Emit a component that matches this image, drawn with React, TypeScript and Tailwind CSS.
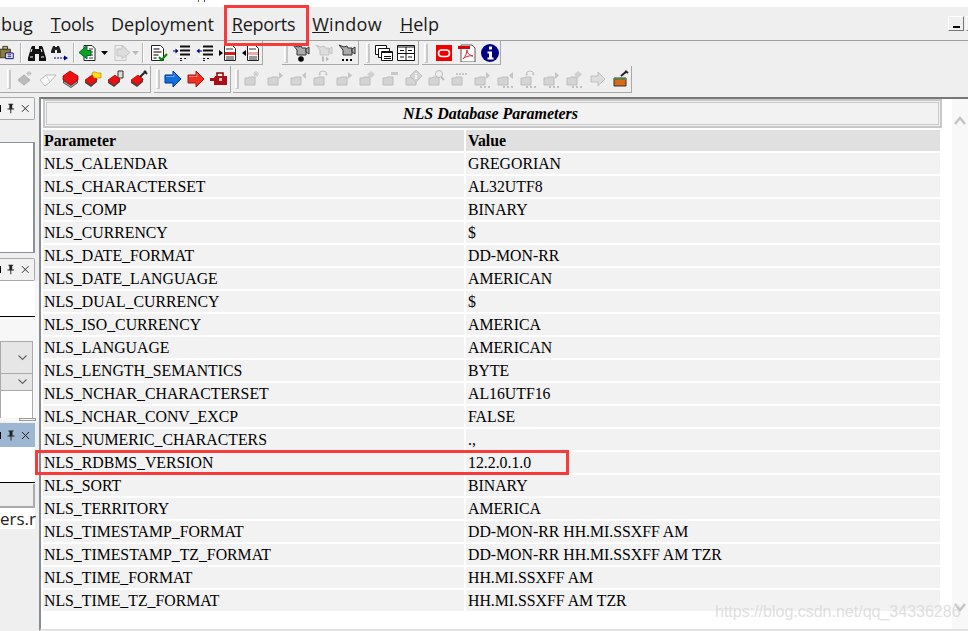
import React from "react";

const rows: [string, string][] = [
  ["NLS_CALENDAR", "GREGORIAN"],
  ["NLS_CHARACTERSET", "AL32UTF8"],
  ["NLS_COMP", "BINARY"],
  ["NLS_CURRENCY", "$"],
  ["NLS_DATE_FORMAT", "DD-MON-RR"],
  ["NLS_DATE_LANGUAGE", "AMERICAN"],
  ["NLS_DUAL_CURRENCY", "$"],
  ["NLS_ISO_CURRENCY", "AMERICA"],
  ["NLS_LANGUAGE", "AMERICAN"],
  ["NLS_LENGTH_SEMANTICS", "BYTE"],
  ["NLS_NCHAR_CHARACTERSET", "AL16UTF16"],
  ["NLS_NCHAR_CONV_EXCP", "FALSE"],
  ["NLS_NUMERIC_CHARACTERS", ".,"],
  ["NLS_RDBMS_VERSION", "12.2.0.1.0"],
  ["NLS_SORT", "BINARY"],
  ["NLS_TERRITORY", "AMERICA"],
  ["NLS_TIMESTAMP_FORMAT", "DD-MON-RR HH.MI.SSXFF AM"],
  ["NLS_TIMESTAMP_TZ_FORMAT", "DD-MON-RR HH.MI.SSXFF AM TZR"],
  ["NLS_TIME_FORMAT", "HH.MI.SSXFF AM"],
  ["NLS_TIME_TZ_FORMAT", "HH.MI.SSXFF AM TZR"],
];

const Ico = ({ children, w = 18 }: { children: React.ReactNode; w?: number }) => (
  <svg width={w} height="18" viewBox={`0 0 ${w} 18`} className="block">
    {children}
  </svg>
);

const Cell = ({ children }: { children: React.ReactNode }) => (
  <div className="flex h-full w-[23px] shrink-0 items-center justify-center">{children}</div>
);

const Grip = () => (
  <div className="mx-[2px] h-[20px] w-[4px] shrink-0 rounded-[1px] border border-r-2 border-[#c8c8c8] border-t-white border-l-white bg-[#f4f4f4]" />
);

const Sep = () => <div className="h-[20px] w-[2px] shrink-0 border-r border-l border-r-white border-l-[#b4b4b4]" />;

const Drop = ({ color = "#000" }: { color?: string }) => (
  <svg width="7" height="4" viewBox="0 0 7 4" className="block shrink-0">
    <path d="M0 0h7L3.500 4z" fill={color} />
  </svg>
);

const Binoculars = ({ small }: { small?: boolean }) =>
  small ? (
    <Ico>
      <path d="M0 7l2-5h2v1h2V2h2l2 5v2H6V6H4v3H0z" fill="#222" />
      <path d="M3 14h11" stroke="#000080" strokeDasharray="2 1" />
      <path d="M13 11.500l4 2.500-4 2.500z" fill="#000080" />
    </Ico>
  ) : (
    <Ico>
      <path d="M0 14l3-10 1-2h3v3h4V2h3l1 2 3 10v3h-7v-7H7v7H0z" fill="#111" />
      <path d="M2 13h3M13 13h3M3 8l1-3M14 8l-1-3" stroke="#fff" />
    </Ico>
  );

const Lines = ({ dir }: { dir: "in" | "out" }) => (
  <Ico>
    <path d="M7 2.500h10M7 6.500h10M7 10.500h10" stroke="#111" strokeWidth="2" />
    <path d="M3 4.500h6M3 8.500h6M3 12.500h6" stroke="#fff" />
    <path d="M7 14.500h2M7 16.500h2M11 14.500h2" stroke="#111" />
    {dir === "in" ? (
      <path d="M0 6.500h2.500v-2l3 2.500-3 2.500v-2H0z" fill="#000080" />
    ) : (
      <path d="M6 6.500H3.500v-2l-3 2.500 3 2.500v-2H6z" fill="#000080" />
    )}
  </Ico>
);

const SheetBand = ({ band, left }: { band: string; left?: boolean }) => (
  <Ico>
    <path d="M5.500 1.500h8l3 3v12h-11z" fill="#fff" stroke="#222" />
    <path d="M7 5h7M7 13h8M7 15h8" stroke="#333" />
    <path d="M6 8h10v3H6z" fill={band} />
    <path d={left ? "M4 6L0 9l4 3z" : "M0 6l4 3-4 3z"} fill="#000" />
  </Ico>
);

const Cam = ({ gray, foot }: { gray?: boolean; foot: "dot" | "pause" | "dots" }) => {
  const c = gray ? "#c4c4c4" : "#333";
  return (
    <Ico>
      <path d="M1 1l5 2 3-1 1 2h4v7H5V6z" fill={gray ? "#ddd" : "#aaa"} stroke={c} />
      <path d="M14 5l3-2v7l-3-2z" fill={gray ? "#ddd" : "#aaa"} stroke={c} />
      {foot === "dot" && <circle cx="9" cy="15" r="2.800" fill="#000" />}
      {foot === "pause" && <path d="M7 12.500h2v5H7zM11 12.500l3 2.500-3 2.500z" fill="#bbb" />}
      {foot === "dots" && <path d="M4 15h2v2H4zM8 15h2v2H8zM12 15h2v2h-2z" fill="#000" />}
    </Ico>
  );
};

const BigBook = () => (
  <Ico>
    <path d="M1 10l8 5 7-5v3l-7 5-8-5z" fill="#555" />
    <path d="M2 12l7 4.500L15 12" stroke="#ddd" fill="none" strokeWidth=".7" />
    <path d="M1 6l7-5 8 5v4l-7 5-8-5z" fill="#ee1010" stroke="#700" strokeWidth=".7" />
  </Ico>
);

const SmallBook = ({ extra }: { extra: React.ReactNode }) => (
  <Ico>
    <path d="M0 11l6 4 6-5v2l-6 5-6-4z" fill="#444" />
    <path d="M0 10l7-5 5 4v1l-6 5-6-4z" fill="#ee1010" stroke="#700" strokeWidth=".6" />
    {extra}
  </Ico>
);

const Arrow = ({ fill, stroke }: { fill: string; stroke: string }) => (
  <Ico>
    <path d="M1 5h8V1l8 8-8 8v-4H1z" fill={fill} stroke={stroke} />
    <path d="M2 6.500h8V3.500" fill="none" stroke="#fff" strokeOpacity=".4" />
  </Ico>
);

type Mark = "star" | "right" | "left" | "undo" | "diamond" | "minus" | "info" | "search" | "dots" | "arrow";

const GrayFolder = ({ mark, dots }: { mark: Mark; dots?: boolean }) => (
  <Ico>
    {mark === "arrow" ? (
      <path d="M2 6h7V2l7 7-7 7v-4H2z" fill="#ddd" stroke="#c0c0c0" />
    ) : (
      <path d="M1 8h3l1-1h6v8H1z" fill="#d4d4d4" stroke="#bdbdbd" />
    )}
    {mark === "star" && <path d="M12 1v6M9 4h6M10 2l4 4M14 2l-4 4" stroke="#c8c8c8" />}
    {mark === "right" && <path d="M12 2l4 3.500-4 3.500z" fill="#c4c4c4" />}
    {mark === "left" && <path d="M16 2l-4 3.500 4 3.500z" fill="#c4c4c4" />}
    {mark === "undo" && <path d="M6 5a4 4 0 0 1 8 0l-2-1M6 5l2-1" stroke="#c0c0c0" fill="none" />}
    {mark === "diamond" && <path d="M12 1l4 3.500-4 3.500-4-3.500z" fill="#d0d0d0" />}
    {mark === "minus" && <path d="M9 2h7v3H9z" fill="#c8c8c8" />}
    {mark === "info" && (
      <>
        <path d="M11 0l6 6-6 6-6-6z" fill="#d4d4d4" stroke="#bdbdbd" />
        <path d="M11 3v1M11 5v4" stroke="#fff" strokeWidth="1.500" />
      </>
    )}
    {mark === "search" && (
      <>
        <circle cx="11" cy="4" r="3.500" fill="#eee" stroke="#bbb" />
        <path d="M13 7l3 3" stroke="#bbb" strokeWidth="2" />
      </>
    )}
    {mark === "dots" && <path d="M5 3h2v2H5zM8 3h2v2H8zM11 3h2v2h-2zM14 3h2v2h-2z" fill="#c8c8c8" />}
    {dots && <path d="M6 16h2v2H6zM10 16h2v2h-2zM14 16h2v2h-2z" fill="#c0c0c0" />}
  </Ico>
);

const grayMarks: [Mark, boolean?][] = [
  ["star"],
  ["right"],
  ["left"],
  ["undo"],
  ["right"],
  ["diamond"],
  ["minus"],
  ["info"],
  ["search"],
  ["dots"],
  ["right", true],
  ["left", true],
  ["undo", true],
  ["right", true],
  ["diamond", true],
  ["arrow"],
];

const bar1 = "flex h-[24px] shrink-0 items-center border-r border-b border-[#a8a8a8]";

const Row1 = () => (
  <div className="flex h-[25px] items-start">
    <div className={`${bar1} w-[263px]`}>
      <div className="flex w-[17px] shrink-0 justify-end overflow-hidden">
        <Ico>
          <path d="M0 5h11v9H0z" fill="#8c7c3c" stroke="#333" />
          <path d="M3 2h5v3H3z" fill="#c8b060" stroke="#333" />
          <path d="M6 9h8v6H6z" fill="#fff" stroke="#000080" />
          <path d="M8 11h4M8 13h4" stroke="#000080" />
        </Ico>
      </div>
      <div className="ml-[3px]"><Sep /></div>
      <div className="ml-[3px]"><Cell><Binoculars /></Cell></div>
      <Cell><Binoculars small /></Cell>
      <div className="ml-[2px]"><Sep /></div>
      <Cell>
        <Ico>
          <path d="M6 1.500h8l3 3v12H6z" fill="#fff" stroke="#222" />
          <path d="M11 5h4M11 8h4M11 11h4M11 14h4" stroke="#333" />
          <path d="M9 1.500L1 8.500 9 15v-3.500h4v-5H9z" fill="#10a020" stroke="#063" />
        </Ico>
      </Cell>
      <div className="ml-[3px]"><Drop /></div>
      <div className="ml-[2px]"><Cell>
        <Ico>
          <path d="M2 1.500h8l3 3v12H2z" fill="#eee" stroke="#c4c4c4" />
          <path d="M9 2l8 6.500L9 15v-3H4V5h5z" fill="#ddd" stroke="#c4c4c4" />
        </Ico>
      </Cell></div>
      <div className="-ml-[1px]"><Drop color="#bbb" /></div>
      <div className="ml-[3px]"><Sep /></div>
      <div className="ml-[3px]"><Cell>
        <Ico>
          <path d="M1.500 1.500h9l3 3v12h-12z" fill="#fff" stroke="#222" />
          <path d="M3.500 5h6M3.500 8h8M3.500 11h5M3.500 14h3" stroke="#555" strokeWidth="1.500" />
          <path d="M9 13l2.500 3L17 10" stroke="#080" strokeWidth="2" fill="none" />
        </Ico>
      </Cell></div>
      <Cell><Lines dir="in" /></Cell>
      <Cell><Lines dir="out" /></Cell>
      <Cell><SheetBand band="#e01818" /></Cell>
      <Cell><SheetBand band="#f4a8a8" left /></Cell>
    </div>
    <div className={`${bar1} ml-[19px] w-[77px]`}>
      <Grip />
      <div className="-ml-[1px] flex h-full">
        <Cell><Cam foot="dot" /></Cell>
        <Cell><Cam gray foot="pause" /></Cell>
        <Cell><Cam foot="dots" /></Cell>
      </div>
    </div>
    <div className={`${bar1} ml-[5px] w-[55px]`}>
      <Grip />
      <div className="flex h-full">
        <Cell>
          <Ico>
            <path d="M.500 1.500h11v9H.500z" fill="#fff" stroke="#111" />
            <path d="M3.500 4.500h11v9h-11z" fill="#fff" stroke="#111" />
            <path d="M6.500 7.500h11v9h-11z" fill="#fff" stroke="#111" />
            <path d="M7 8.500h10M9 12.500h7M9 14.500h7" stroke="#111" />
          </Ico>
        </Cell>
        <div className="-ml-[1px]"><Cell>
          <Ico>
            <path d="M.500 1.500h17v15H.500z" fill="#fff" stroke="#111" />
            <path d="M1 3h16M9 3v13M1 9.500h16M3 6.500h4M11 6.500h4M3 13h4M11 13h4" stroke="#111" />
          </Ico>
        </Cell></div>
      </div>
    </div>
    <div className={`${bar1} ml-[3px] w-[79px]`}>
      <Grip />
      <div className="ml-[2px] flex h-full">
        <Cell>
          <Ico>
            <path d="M1 1h16v16H1z" fill="#f00000" />
            <rect x="3.500" y="6" width="11" height="6.500" rx="3.200" fill="none" stroke="#fff" strokeWidth="1.600" />
          </Ico>
        </Cell>
        <Cell>
          <Ico>
            <path d="M3 1h11l3 3v14H3z" fill="#fff" stroke="#555" />
            <path d="M0 2h12v3H0z" fill="#e00000" />
            <path d="M5 15c3-3 4-7 4-9 0 3 2 5 6 6-3-.500-7 0-10 3z" fill="none" stroke="#d02020" />
          </Ico>
        </Cell>
        <Cell>
          <Ico>
            <circle cx="9" cy="9" r="9" fill="#000080" />
            <path d="M8 2.500h3v3H8zM6.500 7.500H11v6h1.500v2h-6v-2H8v-4H6.500z" fill="#fff" />
          </Ico>
        </Cell>
      </div>
    </div>
  </div>
);

const bar2 = "flex h-[27px] shrink-0 items-center border-r border-b border-[#a8a8a8]";

const Row2 = () => (
  <div className="flex h-[27px]">
    <div className={`${bar2} w-[151px] pl-[5px]`}>
      <Grip />
      <Cell>
        <Ico>
          <path d="M2 10l6-5 6 5-6 5z" fill="#bbb" stroke="#aaa" />
          <path d="M13 1v5M10.500 3.500h5M11 2l4 3M15 2l-4 3" stroke="#c4c4c4" />
        </Ico>
      </Cell>
      <Cell>
        <Ico>
          <path d="M1 10l6-5 10 0-6 7-5 4z" fill="#fafafa" stroke="#bbb" />
          <path d="M7 5l4 7" stroke="#ccc" />
        </Ico>
      </Cell>
      <Cell><BigBook /></Cell>
      <Cell><SmallBook extra={<path d="M7 4l1-2h3l1 1h4v5H9z" fill="#ffe010" stroke="#a08000" strokeWidth=".6" />} /></Cell>
      <Cell><SmallBook extra={<path d="M10 1h5v7h-5z" fill="#ddd" stroke="#333" />} /></Cell>
      <Cell><SmallBook extra={<path d="M9 7l6-6M13 1l3 3" stroke="#222" strokeWidth="2" />} /></Cell>
    </div>
    <div className={`${bar2} ml-[3px] w-[77px]`}>
      <Grip />
      <div className="-ml-[1px] flex h-full">
        <Cell><Arrow fill="#1070e0" stroke="#003090" /></Cell>
        <Cell><Arrow fill="#f03020" stroke="#a01810" /></Cell>
        <Cell>
          <Ico>
            <path d="M7 6V3h6v3" fill="none" stroke="#800" strokeWidth="1.500" />
            <path d="M0 8h4l1-2h12v9H4v-4H0z" fill="#a80f14" />
            <path d="M9 8h3v3H9z" fill="#f0c0c0" />
          </Ico>
        </Cell>
      </div>
    </div>
    <div className={`${bar2} ml-[2px] w-[399px]`}>
      <Grip />
      <div className="flex h-full">
        {grayMarks.map(([m, d], i) => (
          <Cell key={i}><GrayFolder mark={m} dots={d} /></Cell>
        ))}
        <Cell>
          <Ico>
            <path d="M2 8h12v8H2z" fill="#d86a18" stroke="#333" />
            <path d="M2 8h12v2H2z" fill="#608040" />
            <path d="M9 6l6-5M13 1l3 2" stroke="#222" strokeWidth="2" />
          </Ico>
        </Cell>
      </div>
    </div>
  </div>
);

const Pin = ({ active }: { active?: boolean }) => (
  <div
    className={`flex w-[35px] shrink-0 items-center justify-end gap-[6px] pr-[5px] ${
      active ? "h-[24px] bg-[#9db7d3]" : "h-[23px] rounded-r-[2px] border border-l-0 border-[#aaaaaa] bg-[#f2f2f2]"
    }`}
  >
    <div className="h-[7px] w-[1px] bg-black" />
    <svg width="8" height="11" viewBox="0 0 8 11" className="block">
      <path d="M1.500 .500h5v1h-1v4h2v1H.500v-1h2v-4h-1zM3.500 6.500h1v4h-1z" fill="#222" />
    </svg>
    <svg width="9" height="9" viewBox="0 0 9 9" className="block">
      <path d="M1 1l7 7M8 1L1 8" stroke="#222" fill="none" />
    </svg>
  </div>
);

const Chev = ({ y }: { y: "up" | "down" }) => (
  <svg width="12" height="9" viewBox="0 0 12 9" className="block">
    <path d={y === "up" ? "M1 8l5-6 5 6" : "M1 1l5 6 5-6"} fill="none" stroke="#c4c4c4" strokeWidth="2.500" />
  </svg>
);

const Combo = ({ h }: { h: string }) => (
  <div className={`flex items-center justify-end border-b border-[#aaaaaa] bg-[#e6e6e6] pr-[5px] ${h}`}>
    <svg width="9" height="6" viewBox="0 0 9 6" className="block">
      <path d="M.500 .500l4 4 4-4" fill="none" stroke="#666" strokeWidth="1.200" />
    </svg>
  </div>
);

const LeftPane = () => (
  <aside className="flex h-full w-[39px] shrink-0 flex-col bg-[#efefef]">
    <Pin />
    <div className="mt-[22px] h-[111px] w-[35px] border-y border-r-2 border-[#8b9299] bg-white" />
    <div className="mt-[5px]"><Pin /></div>
    <div className="flex w-[39px] flex-col bg-[#f7f7f7]">
      <div className="h-[36px] w-[35px] border-b border-black bg-white" />
      <div className="h-[24px] w-[33px]" />
      <div className="w-[33px] border-x border-t border-[#aaaaaa]">
        <Combo h="h-[32px]" />
        <Combo h="h-[17px]" />
        <div className="h-[27px] bg-white" />
      </div>
      <div className="flex h-[4px] justify-end">
        <div className="mr-[3px] h-[3px] w-[17px] border border-[#999]" />
      </div>
    </div>
    <div className="mt-[1px]"><Pin active /></div>
    <div className="h-[36px] w-[35px] border-b border-black bg-white" />
    <div className="mt-[1px] h-[24px] w-[35px] border-r-2 border-b-2 border-[#aaaaaa] bg-[#efefef]" />
    <div className="h-[21px] w-[35px] bg-white font-['Open_Sans',sans-serif] text-[17px] leading-[21px] text-[#222]">ers.r</div>
  </aside>
);

const TableRow = ({ a, b, head }: { a: string; b: string; head?: boolean }) => (
  <div className="grid grid-cols-[421px_474px] gap-x-[2px]">
    <div className={`h-[21px] pl-px leading-[21px] ${head ? "bg-[#e0e0e0] font-bold" : "bg-[#f2f2f2]"}`}>{a}</div>
    <div className={`h-[21px] pl-[2px] leading-[21px] ${head ? "bg-[#e0e0e0] font-bold" : "bg-[#f2f2f2]"}`}>{b}</div>
  </div>
);

const MainPane = () => (
  <main className="flex h-full flex-1 border-t-2 border-b-2 border-l-2 border-t-[#777] border-r-0 border-b-[#e2e2e2] border-l-[#888d92] bg-white font-['Liberation_Serif',serif] text-[15.800px] text-black">
    <div className="w-[901px] pl-[2px]">
      <div className="w-[899px] border-2 border-[#c8c8c8] bg-[#f2f2f2] p-[1px]">
        <div className="flex h-[23px] items-center justify-center border border-[#c8c8c8] pr-[4px] text-[16px] font-bold italic">
          NLS Database Parameters
        </div>
      </div>
      <div className="mt-[2px] flex flex-col gap-[2px]">
        <TableRow a="Parameter" b="Value" head />
        {rows.map(([a, b]) => (
          <TableRow key={a} a={a} b={b} />
        ))}
      </div>
    </div>
    <div className="ml-[10px] flex w-[16px] flex-col items-center justify-between bg-[#f8f8f8] pt-[17px] pb-[17px]">
      <Chev y="up" />
      <Chev y="down" />
    </div>
  </main>
);

const MinButton = ({ bar }: { bar?: boolean }) => (
  <div className="flex h-[15px] w-[16px] shrink-0 items-end justify-center border border-t-white border-r-[#777] border-b-[#777] border-l-white bg-[#efefef] pb-[2px]">
    {bar && <div className="h-[2px] w-[7px] bg-black" />}
  </div>
);

export default function App() {
  return (
    <div className="relative flex h-[631px] w-[968px] flex-col overflow-hidden bg-white">
      <div className="flex h-[7px] shrink-0 items-start gap-[5px] pl-[198px]">
        <div className="h-[2px] w-px bg-[#7a5a30]" />
        <div className="h-[2px] w-px bg-[#30507a]" />
      </div>
      <div className="shrink-0 bg-[#efefef]">
        <div className="flex h-[34px] items-center overflow-hidden border-b border-[#a0a0a0] pt-[2px] pl-px font-['Open_Sans',sans-serif] text-[18px] text-[#1a1a1a]">
          <span>bug</span>
          <span className="ml-[18px] tracking-[-0.3px]"><u>T</u>ools</span>
          <span className="ml-[17px]">Deployment</span>
          <span className="ml-[18px] tracking-[-0.3px]"><u>R</u>eports</span>
          <span className="ml-[17px] tracking-[0.3px]"><u>W</u>indow</span>
          <span className="ml-[18px]"><u>H</u>elp</span>
          <div className="mt-[-2px] mr-[-14px] ml-auto flex gap-[2px]">
            <MinButton bar />
            <MinButton />
          </div>
        </div>
        <Row1 />
        <Row2 />
        <div className="h-[4px]" />
      </div>
      <div className="flex min-h-0 flex-1 bg-[#efefef]">
        <LeftPane />
        <MainPane />
      </div>

      <div className="absolute top-[5px] left-[224px] h-[41px] w-[85px] border-[3px] border-[#f73b3b]" />
      <div className="absolute top-[450px] left-[35px] h-[25px] w-[534px] border-[3px] border-[#f73b3b]" />
      <div className="absolute top-[601px] left-[715px] font-['Liberation_Sans',sans-serif] text-[16px] leading-[22px] text-[#dcdcdc] opacity-90">
        https://blog.csdn.net/qq_34336286
      </div>
    </div>
  );
}
